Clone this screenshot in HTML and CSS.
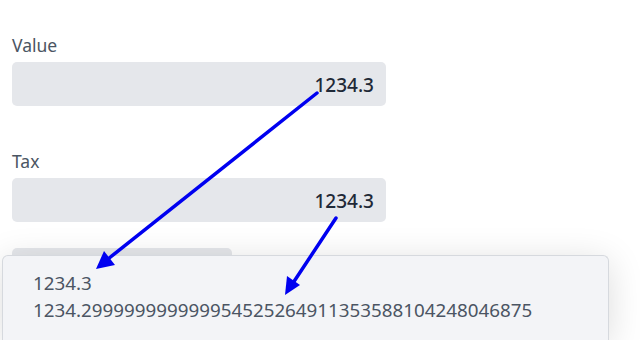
FILE: index.html
```html
<!DOCTYPE html>
<html>
<head>
<meta charset="utf-8">
<link rel="stylesheet" href="styles.css">
</head>
<body>
<div class="form">
  <div class="field">
    <div class="label">Value</div>
    <div class="input">1234.3</div>
  </div>
  <div class="field">
    <div class="label">Tax</div>
    <div class="input">1234.3</div>
  </div>
  <div class="field">
    <div class="input short"></div>
  </div>
</div>
<div class="popup">
  <div class="line">1234.3</div>
  <div class="line">1234.299999999999954525264911353588104248046875</div>
</div>
<svg class="arrows" width="640" height="340" viewBox="0 0 640 340">
  <line x1="317" y1="93" x2="108" y2="259" stroke="#0000f0" stroke-width="3.5" stroke-linecap="round"/>
  <polygon points="96,269 104,251 115,265" fill="#0000f0"/>
  <line x1="336" y1="218" x2="293" y2="283" stroke="#0000f0" stroke-width="3.5" stroke-linecap="round"/>
  <polygon points="285,295 287,276 300,285" fill="#0000f0"/>
</svg>
</body>
</html>
```
FILE: styles.css
```css
html, body {
  margin: 0;
  padding: 0;
  background: #ffffff;
  width: 640px;
  height: 340px;
  overflow: hidden;
  font-family: "Noto Sans", "Open Sans", sans-serif;
}
.form {
  padding: 34px 0 0 12px;
  width: 374px;
  height: 300px;
  overflow: hidden;
  display: flex;
  flex-direction: column;
  gap: 44px;
}
.label {
  font-size: 17.5px;
  line-height: 22px;
  color: #4b5563;
  margin-bottom: 6px;
}
.input {
  height: 44px;
  border-radius: 5px;
  background: #e5e7eb;
  box-sizing: border-box;
  padding: 3px 12px 0 0;
  text-align: right;
  font-size: 19px;
  line-height: 41px;
  color: #1f2937;
  font-weight: 500;
}
.input.short {
  width: 220px;
  margin-top: -18px;
}
.popup {
  position: absolute;
  left: 2px;
  top: 255px;
  width: 607px;
  height: 85px;
  box-sizing: border-box;
  border: 1px solid #d6d9de;
  border-bottom: none;
  border-radius: 6px 6px 0 0;
  background: #f3f4f7;
  box-shadow: 0 6px 36px rgba(0, 0, 0, 0.14);
  padding: 14px 0 0 30px;
}
.line {
  font-size: 18.8px;
  line-height: 27px;
  color: #4b5563;
  font-weight: 400;
}
.arrows {
  position: absolute;
  left: 0;
  top: 0;
}
```
